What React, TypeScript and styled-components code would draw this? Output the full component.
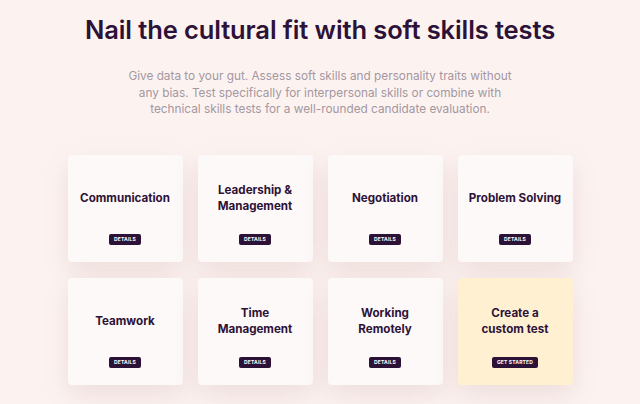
import React from "react";
import styled, { createGlobalStyle } from "styled-components";

const GlobalStyle = createGlobalStyle`
  html, body {
    margin: 0;
    padding: 0;
    background: #fcf3f1;
  }
  body {
    font-family: Inter, "Liberation Sans", sans-serif;
  }
`;

const Page = styled.main`
  width: 640px;
  height: 404px;
  overflow: hidden;
  display: flex;
  flex-direction: column;
  align-items: center;
  padding-top: 12px;
  box-sizing: border-box;
`;

const Heading = styled.h1`
  margin: 0;
  font-family: Inter, "Liberation Sans", sans-serif;
  font-size: 25.5px;
  line-height: 36px;
  font-weight: 600;
  letter-spacing: -0.1px;
  color: #2d1237;
`;

const Lead = styled.p`
  margin: 20px 0 0;
  width: 400px;
  text-align: center;
  font-size: 11.8px;
  line-height: 16.5px;
  color: #a5969f;
`;

const Grid = styled.div`
  margin-top: 37px;
  display: grid;
  grid-template-columns: repeat(4, 115px);
  grid-auto-rows: 107px;
  gap: 16px 15px;
`;

const Card = styled.div<{ $accent?: boolean }>`
  display: flex;
  flex-direction: column;
  align-items: center;
  padding: 8px 6px 17px;
  border-radius: 4px;
  background: ${(p) => (p.$accent ? "#fff0d2" : "#fcf9f8")};
  box-shadow: 0 10px 26px rgba(140, 80, 70, 0.13);
`;

const Title = styled.div`
  flex: 1;
  display: flex;
  align-items: center;
  justify-content: center;
  text-align: center;
  font-size: 11.6px;
  line-height: 16px;
  font-weight: 700;
  color: #2d1237;
`;

const Button = styled.button`
  border: 0;
  border-radius: 2px;
  background: #2d1237;
  color: #fff;
  font-family: Inter, "Liberation Sans", sans-serif;
  font-size: 5px;
  font-weight: 700;
  letter-spacing: 0.15px;
  text-transform: uppercase;
  height: 11px;
  padding: 0 5px;
  cursor: pointer;
`;

const tests = [
  "Communication",
  "Leadership & Management",
  "Negotiation",
  "Problem Solving",
  "Teamwork",
  "Time Management",
  "Working Remotely",
];

const breaks: Record<string, React.ReactNode> = {
  "Leadership & Management": (
    <>
      Leadership &amp;
      <br />
      Management
    </>
  ),
  "Time Management": (
    <>
      Time
      <br />
      Management
    </>
  ),
  "Working Remotely": (
    <>
      Working
      <br />
      Remotely
    </>
  ),
};

const App = () => (
  <>
    <GlobalStyle />
    <Page>
      <Heading>Nail the cultural fit with soft skills tests</Heading>
      <Lead>
        Give data to your gut. Assess soft skills and personality traits
        without any bias. Test specifically for interpersonal skills or combine
        with technical skills tests for a well-rounded candidate evaluation.
      </Lead>
      <Grid>
        {tests.map((t) => (
          <Card key={t}>
            <Title>{breaks[t] ?? t}</Title>
            <Button>Details</Button>
          </Card>
        ))}
        <Card $accent>
          <Title>
            Create a
            <br />
            custom test
          </Title>
          <Button>Get started</Button>
        </Card>
      </Grid>
    </Page>
  </>
);

export default App;
